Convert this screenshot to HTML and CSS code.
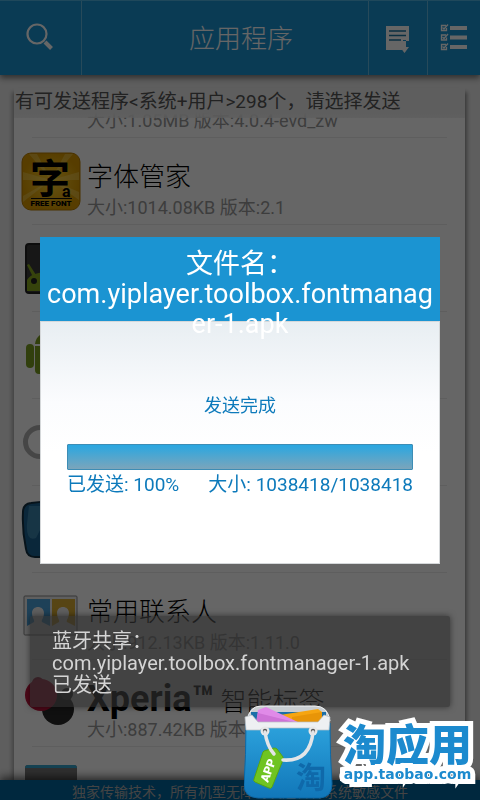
FILE: index.html
```html
<!DOCTYPE html>
<html lang="zh-CN">
<head>
    <meta charset="UTF-8">
    <meta name="viewport" content="width=device-width, initial-scale=1.0">
    <title>应用程序</title>
    <link rel="stylesheet" href="styles.css">
</head>
<body>
    <div class="app">
        <header class="top-bar">
            <button type="button" class="bar-button search-button" aria-label="搜索">
                <svg width="32" height="32" viewBox="0 0 32 32" fill="none" stroke="currentColor">
                    <circle cx="12" cy="12" r="9.5" stroke-width="2.2"/>
                    <path d="M20 20l6.500 6.500" stroke-width="4"/>
                </svg>
            </button>
            <h1>应用程序</h1>
            <button type="button" class="bar-button sort-button" aria-label="排序">
                <svg width="28" height="30" viewBox="0 0 28 30">
                    <path fill="currentColor" d="M2 3h23v15h-3v-1h-3v8l-1 2H2z"/>
                    <path stroke="#1b75a3" stroke-width="1.600" d="M5 8h17M5 12.500h17M5 17h12"/>
                    <path fill="currentColor" d="M19 18h3v6h3l-4.500 6-4.500-6h3z"/>
                </svg>
            </button>
            <button type="button" class="bar-button select-button" aria-label="多选">
                <svg width="28" height="28" viewBox="0 0 28 28">
                    <g fill="none" stroke="currentColor" stroke-width="1.300">
                        <path d="M6 1.500H1.500v5h5V4M6 11H1.500v5h5v-2.500M6 20.500H1.500v5h5V23"/>
                        <path d="M2.500 3.500l1.500 1.500L8 .5M2.500 13l1.500 1.500L8 10M2.500 22.500L4 24l4-4.500"/>
                    </g>
                    <path fill="currentColor" d="M10 2h17v4H10zM10 11.500h17v4H10zM10 21h17v4H10z"/>
                </svg>
            </button>
        </header>

        <main class="panel">
            <p class="notice">有可发送程序&lt;系统+用户&gt;298个，请选择发送</p>
            <ul class="app-list">
                <li class="app-row">
                    <span class="app-icon"></span>
                    <div class="app-info">
                        <h2></h2>
                        <p>大小:1.05MB 版本:4.0.4-evd_zw</p>
                    </div>
                </li>
                <li class="app-row">
                    <svg class="app-icon" viewBox="0 0 60 60">
                        <defs>
                            <radialGradient id="gold">
                                <stop offset="0" stop-color="#ffd030"/>
                                <stop offset="1" stop-color="#d99a00"/>
                            </radialGradient>
                        </defs>
                        <rect x="1" y="1" width="58" height="57" rx="9" fill="url(#gold)" stroke="#b87c00"/>
                        <path fill="#ffe88a" opacity=".35" d="M30 28L8 2h8zM30 28L44 2h8zM30 28L2 20v8zM30 28L58 20v8zM30 28L2 44v6zM30 28L58 40v8z"/>
                        <text class="icon-glyph" x="29" y="41" text-anchor="middle">字</text>
                        <text class="icon-letter" x="41" y="45">a</text>
                        <path stroke="#111" stroke-width="1" d="M10 46.500h41"/>
                        <text class="icon-caption" x="30" y="54" text-anchor="middle">FREE FONT</text>
                    </svg>
                    <div class="app-info">
                        <h2>字体管家</h2>
                        <p>大小:1014.08KB 版本:2.1</p>
                    </div>
                </li>
                <li class="app-row">
                    <svg class="app-icon" viewBox="0 0 60 60">
                        <rect x="5" y="5" width="50" height="49" rx="3" fill="#3a3a3a" stroke="#222" stroke-width="2"/>
                        <path fill="#87a81f" d="M6 52V41c4-7 14-8 24-8v19zM6 26l2-1 7 11-3 2z"/>
                        <circle cx="13" cy="42" r="3" fill="#222"/>
                    </svg>
                </li>
                <li class="app-row">
                    <svg class="app-icon" viewBox="0 0 60 60">
                        <rect x="5" y="18" width="8" height="24" rx="4" fill="#7c9e22"/>
                        <path fill="#7c9e22" d="M14 20h32v24a4 4 0 0 1-4 4H18a4 4 0 0 1-4-4zM14 18c1-8 7-12 16-12s15 4 16 12z"/>
                        <path fill="#7c9e22" d="M20 47h7v10h-7zM33 47h7v10h-7z"/>
                    </svg>
                </li>
                <li class="app-row">
                    <svg class="app-icon" viewBox="0 0 60 60">
                        <circle cx="19" cy="29" r="14.500" fill="none" stroke="#b0b0b0" stroke-width="5"/>
                    </svg>
                </li>
                <li class="app-row">
                    <svg class="app-icon" viewBox="0 0 60 60">
                        <path fill="#1b6292" stroke="#123043" stroke-width="2" d="M10 3q20-3 42 0 5 1 5 6v42q0 6-6 6H14q-8 0-9-8Q1 30 2 12q0-8 8-9z"/>
                        <path fill="#3b85ad" d="M8 6h30q-14 6-17 20l-6 12q-10 4-9-14z"/>
                    </svg>
                    <div class="app-info">
                        <h2></h2>
                        <p>大小:1.02MB 版本:1.0</p>
                    </div>
                </li>
                <li class="app-row">
                    <svg class="app-icon" viewBox="0 0 60 60">
                        <rect x="3" y="9" width="53" height="39" rx="1" fill="#eee" stroke="#888"/>
                        <path fill="#4da2dc" d="M6 12h23v33H6z"/>
                        <path fill="#d9ad32" d="M31 12h23v33H31z"/>
                        <path fill="#eee" d="M6 45v-6l7-4c1-2-2-4-2-9 0-8 12-8 12 0 0 5-3 7-2 9l8 4v6zM31 45v-6l7-4c1-2-2-4-2-9 0-8 12-8 12 0 0 5-3 7-2 9l8 4v6z"/>
                    </svg>
                    <div class="app-info">
                        <h2>常用联系人</h2>
                        <p>大小:912.13KB 版本:1.11.0</p>
                    </div>
                </li>
                <li class="app-row">
                    <svg class="app-icon" viewBox="0 0 60 60">
                        <circle cx="37" cy="35" r="16" fill="#2a2a2a"/>
                        <circle cx="46" cy="20" r="6" fill="#3a3a3a"/>
                        <circle cx="17" cy="9" r="6" fill="#a50f35"/>
                        <circle cx="20" cy="21" r="16" fill="#c4143c"/>
                    </svg>
                    <div class="app-info">
                        <h2><b>Xperia™</b> 智能标签</h2>
                        <p>大小:887.42KB 版本:1.0</p>
                    </div>
                </li>
                <li class="app-row">
                    <svg class="app-icon" viewBox="0 0 60 60">
                        <rect x="4" y="4" width="52" height="50" rx="3" fill="#777"/>
                        <path fill="#35a5cd" d="M4 7q0-3 3-3h46q3 0 3 3H4z"/>
                    </svg>
                </li>
            </ul>
        </main>

        <footer class="bottom-bar">独家传输技术，所有机型无障碍发送各种系统敏感文件</footer>
    </div>

    <div class="backdrop">
        <section class="send-dialog" role="dialog" aria-labelledby="file-name">
            <h2 class="dialog-title" id="file-name">文件名：<br>com.yiplayer.toolbox.fontmanager-1.apk</h2>
            <div class="dialog-body">
                <label class="send-state" for="send-progress">发送完成</label>
                <progress id="send-progress" value="1038418" max="1038418"></progress>
                <div class="send-numbers">
                    <span>已发送: 100%</span>
                    <span>大小: 1038418/1038418</span>
                </div>
            </div>
        </section>
    </div>

    <div class="toast" role="status">蓝牙共享：<br>com.yiplayer.toolbox.fontmanager-1.apk<br>已发送</div>

    <a class="store-badge" href="#">
        <svg class="bag" width="92" height="94" viewBox="0 0 92 94">
            <defs>
                <linearGradient id="bag-blue" x2="0" y2="1">
                    <stop offset="0" stop-color="#2da3dd"/>
                    <stop offset="1" stop-color="#1177b9"/>
                </linearGradient>
            </defs>
            <path fill="#c9ced2" stroke="#f2f4f5" d="M3 16Q5 1 17 1h54q13 0 15 15z"/>
            <path fill="url(#bag-blue)" stroke="#0d69a6" d="M2 18h84q0 32 2 61 0 13-12 14H14Q0 92 0 80 2 50 2 18z"/>
            <path fill="#1b6fa8" d="M7 7h75v11H7z"/>
            <path fill="#f6a511" d="M36 10l38-6 4 3v13H48z"/>
            <path fill="#d98600" d="M48 12l30-5v13H48z" opacity=".5"/>
            <path fill="#e08ae8" d="M14 5l8-3 34 16H12z"/>
            <path fill="#bb5cc6" d="M14 8l40 10H12z" opacity=".5"/>
            <path fill="#eef0f2" stroke="#b9c0c5" stroke-width=".700" d="M1 12l7-2 6 7h60l6-7 6 2-1 13H73l-3-2H19l-3 2H2z"/>
            <circle cx="21" cy="26" r="4.500" fill="#e8e8e8"/>
            <circle cx="69" cy="26" r="4.500" fill="#e8e8e8"/>
            <circle cx="21" cy="26" r="2.200" fill="#555"/>
            <circle cx="69" cy="26" r="2.200" fill="#555"/>
            <text class="bag-glyph" x="52" y="83">淘</text>
            <path fill="#6fc421" stroke="#57a512" d="M20 46l10-3q2 0 3 1l6 8v3L28 82q-1 2-3 1L11 77q-2-1-1-3l9-27z"/>
            <path fill="none" stroke="#e3e5e8" stroke-width="3.500" stroke-linecap="round" d="M21 27q2 14 9 22M69 27q-3 30-30 28"/>
            <text class="bag-tag" transform="translate(24 78) rotate(-70)">APP</text>
        </svg>
        <span class="store-name">
            <span class="store-title">淘应用</span>
            <span class="store-url">app.taobao.com</span>
        </span>
    </a>
</body>
</html>
```
FILE: styles.css
```css
* {
    box-sizing: border-box;
}

body {
    margin: 0;
    font-family: Roboto, "Noto Sans CJK SC", sans-serif;
    font-size: 18px;
    background-color: #ebebeb;
}

h1, h2, p, ul {
    margin: 0;
    padding: 0;
}

.app {
    display: flex;
    flex-direction: column;
    height: 100vh;
    overflow: hidden;
}

/* top bar */
.top-bar {
    display: flex;
    flex: none;
    height: 75px;
    color: #fff;
    background-color: #1b94d2;
    border-top: 1px solid #4fb4e4;
    box-shadow: 0 3px 6px rgba(0, 0, 0, 0.5);
    z-index: 2;
}

.top-bar h1 {
    flex: 1;
    padding-left: 32px;
    font-size: 26px;
    font-weight: 300;
    line-height: 76px;
    text-align: center;
}

.bar-button {
    display: flex;
    align-items: center;
    justify-content: center;
    padding: 0;
    color: inherit;
    background: none;
    border: 0;
    cursor: pointer;
}

.search-button {
    width: 82px;
    border-right: 1px solid #63b8e2;
}

.sort-button {
    width: 59px;
    border-left: 1px solid #63b8e2;
}

.select-button {
    width: 53px;
    border-left: 1px solid #63b8e2;
}

/* list */
.panel {
    flex: 1;
    min-height: 0;
    margin: 13px 15px 0 14px;
    background-color: #fff;
    box-shadow: 3px 3px 4px -1px rgba(0, 0, 0, 0.4), -3px 3px 4px -1px rgba(0, 0, 0, 0.3);
}

.notice {
    position: relative;
    height: 30px;
    padding-left: 1px;
    font-size: 19px;
    line-height: 28px;
    color: #555;
    white-space: nowrap;
    background: linear-gradient(#ebebeb 80%, rgba(235, 235, 235, 0.8));
    z-index: 1;
}

.app-list {
    margin-top: -67px;
    list-style: none;
}

.app-row {
    display: flex;
    gap: 6px;
    height: 87px;
    padding: 14px 7px 0;
    background: linear-gradient(#ebebeb, #ebebeb) 18px 100% / calc(100% - 36px) 1px no-repeat;
}

.app-icon {
    flex: none;
    width: 60px;
    height: 60px;
}

.app-info h2 {
    height: 41px;
    font-size: 26px;
    font-weight: 300;
    line-height: 50px;
    white-space: nowrap;
}

.app-info b {
    font-size: 36px;
    font-weight: 700;
}

.app-info p {
    line-height: 30px;
    color: #999;
    white-space: nowrap;
}

.icon-glyph {
    font-size: 40px;
    font-weight: 700;
}

.icon-letter {
    font-size: 16px;
    font-weight: 700;
}

.icon-caption {
    font-size: 8px;
    font-weight: 900;
}

/* bottom bar */
.bottom-bar {
    flex: none;
    height: 20px;
    font-size: 14px;
    line-height: 24px;
    text-align: center;
    color: #aaa;
    background-color: #00649c;
    box-shadow: 0 -3px 8px rgba(0, 0, 0, 0.6);
    z-index: 2;
}

/* dialog */
.backdrop {
    position: fixed;
    inset: 0;
    display: flex;
    align-items: center;
    justify-content: center;
    padding: 0 40px;
    background-color: rgba(0, 0, 0, 0.6);
    z-index: 3;
}

.send-dialog {
    flex: 1;
}

.dialog-title {
    position: relative;
    height: 84px;
    padding: 12px 4px 0;
    font-size: 27px;
    font-weight: 400;
    line-height: 30px;
    text-align: center;
    color: #fff;
    word-break: break-word;
    background-color: #1b94d2;
}

.dialog-body {
    display: flex;
    flex-direction: column;
    min-height: 243px;
    padding: 71px 26px 0;
    color: #0d7abb;
    background: linear-gradient(#e8eef2, #fbfcfe 80px, #fff 130px);
    border: 1px solid #d5d8da;
}

.send-state {
    margin-bottom: 25px;
    line-height: 26px;
    text-align: center;
}

progress {
    width: 100%;
    height: 26px;
    appearance: none;
    border: 1px solid #3d8db5;
    border-radius: 1px;
}

progress::-webkit-progress-bar {
    background-color: #ddd;
}

progress::-webkit-progress-value {
    background: linear-gradient(#29a7e1, #7ba5bb);
}

.send-numbers {
    display: flex;
    justify-content: space-between;
    font-size: 19px;
    line-height: 30px;
}

/* toast */
.toast {
    position: fixed;
    right: 30px;
    bottom: 93px;
    left: 30px;
    padding: 14px 22px 11px;
    font-size: 20px;
    line-height: 22px;
    color: #d4d4d4;
    background-color: rgba(48, 48, 48, 0.63);
    border-radius: 2px;
    box-shadow: 0 0 6px rgba(0, 0, 0, 0.5);
    z-index: 4;
}

/* store badge */
.store-badge {
    position: fixed;
    right: 8px;
    bottom: 1px;
    display: flex;
    align-items: center;
    gap: 7px;
    color: #1c8ace;
    text-decoration: none;
    z-index: 5;
}

.bag-glyph {
    font-size: 30px;
    font-weight: 700;
    fill: #0f69aa;
}

.bag-tag {
    font-size: 12px;
    font-weight: 900;
    fill: #fff;
}

.store-name {
    display: flex;
    flex-direction: column;
    align-items: center;
    padding-top: 4px;
    font-weight: 900;
    -webkit-text-stroke: 10px #fff;
    stroke-linejoin: round;
    paint-order: stroke fill;
}

.store-title {
    font-size: 43px;
    line-height: 40px;
}

.store-url {
    font-family: "DejaVu Sans", sans-serif;
    font-size: 14px;
    line-height: 16px;
}
```
